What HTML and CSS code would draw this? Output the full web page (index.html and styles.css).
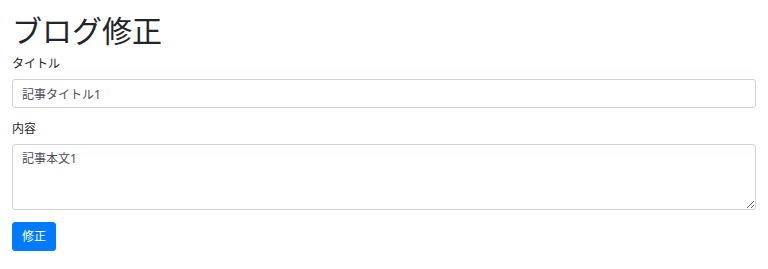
FILE: index.html
```html
<!DOCTYPE html>
<html lang="ja">
<head>
<meta charset="utf-8">
<title>ブログ修正</title>
<link rel="stylesheet" href="styles.css">
</head>
<body>
<div class="container">
  <h1 class="title">ブログ修正</h1>
  <form class="form">
    <div class="form-group">
      <label class="label" for="title">タイトル</label>
      <input class="control input" id="title" type="text" value="記事タイトル1">
    </div>
    <div class="form-group">
      <label class="label" for="body">内容</label>
      <textarea class="control textarea" id="body" rows="3">記事本文1</textarea>
    </div>
    <button class="btn" type="button">修正</button>
  </form>
</div>
</body>
</html>
```
FILE: styles.css
```css
* { box-sizing: border-box; }
html, body { margin: 0; padding: 0; background: #fff; }
body {
  font-family: "Noto Sans", "Noto Sans CJK JP", sans-serif;
  font-size: 12px;
  line-height: 18px;
  color: #212529;
}
.container {
  padding: 13px 12px 0 12px;
}
.title {
  margin: 0 0 6px 0;
  font-size: 30px;
  line-height: 36px;
  font-weight: 400;
  color: #212529;
}
.form { margin: 0; }
.form-group { margin-bottom: 12px; }
.label {
  display: inline-block;
  margin-bottom: 6px;
}
.control {
  display: block;
  width: 100%;
  padding: 4.5px 9px;
  font-family: inherit;
  font-size: 12px;
  line-height: 18px;
  color: #495057;
  background: #fff;
  border: 1px solid #ced4da;
  border-radius: 3px;
  margin: 0;
}
.input { height: 29px; }
.textarea { height: 66px; resize: vertical; }
.btn {
  display: inline-block;
  height: 29px;
  padding: 4.5px 9px;
  font-family: inherit;
  font-size: 12px;
  line-height: 18px;
  color: #fff;
  background: #007bff;
  border: 1px solid #007bff;
  border-radius: 3px;
  margin: 0;
}
```
